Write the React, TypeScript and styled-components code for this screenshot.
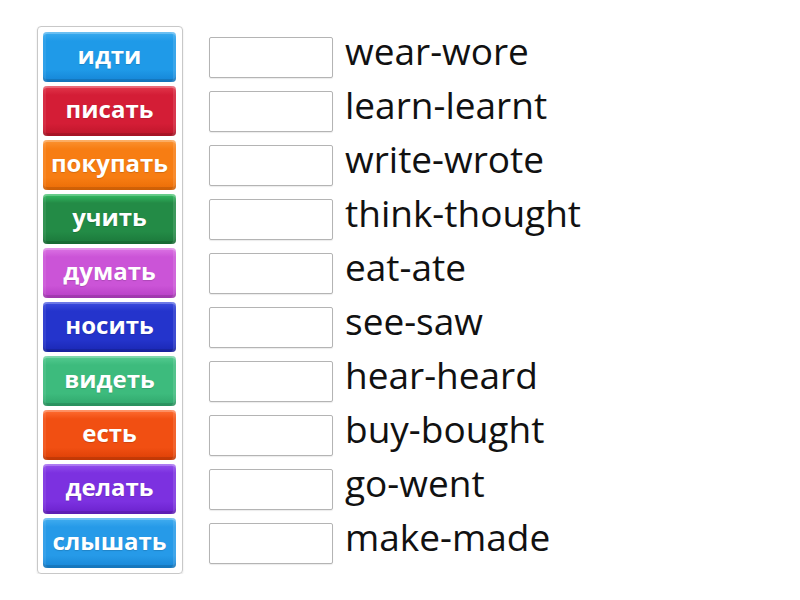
import * as React from "react";
import styled, { createGlobalStyle } from "styled-components";

const GlobalStyle = createGlobalStyle`
  html, body {
    margin: 0;
    padding: 0;
    background: #fff;
    font-family: "Open Sans", "Liberation Sans", sans-serif;
  }
`;

const SPage = styled.div`
  display: flex;
  align-items: flex-start;
  padding: 26px 0 0 37px;
  gap: 26px;
`;

const STilePanel = styled.div`
  display: flex;
  flex-direction: column;
  gap: 4px;
  padding: 5px 6px 5px 5px;
  border: 1px solid #c8c8c8;
  border-radius: 4px;
  box-shadow: 0 1px 2px rgba(0, 0, 0, 0.12);
`;

interface ITileStyle {
  top: string;
  base: string;
  bottom: string;
}

const STile = styled.div<ITileStyle>`
  width: 133px;
  height: 50px;
  box-sizing: border-box;
  display: flex;
  align-items: center;
  justify-content: center;
  padding-bottom: 4px;
  border-radius: 4px;
  background: linear-gradient(
    to bottom,
    ${({ top }) => top} 0%,
    ${({ base }) => base} 18%,
    ${({ base }) => base} 75%,
    ${({ bottom }) => bottom} 100%
  );
  box-shadow: inset 0 2px 0 rgba(255, 255, 255, 0.25),
    inset 3px 0 0 rgba(255, 255, 255, 0.08),
    inset -3px 0 0 rgba(255, 255, 255, 0.12),
    inset 0 -3px 0 rgba(0, 0, 0, 0.12);
  color: #fff;
  font-family: "Open Sans", sans-serif;
  font-weight: 700;
  font-size: 24px;
  line-height: 1;
  white-space: nowrap;
  text-shadow: 0 1px 1px rgba(0, 0, 0, 0.15);
`;

const SAnswerColumn = styled.div`
  display: flex;
  flex-direction: column;
  gap: 4px;
  padding-top: 6px;
`;

const SRow = styled.div`
  height: 50px;
  display: flex;
  align-items: center;
  gap: 12px;
`;

const SDropBox = styled.div`
  width: 124px;
  height: 41px;
  flex-shrink: 0;
  box-sizing: border-box;
  border: 1px solid #b4b4b4;
  border-radius: 2px;
  background: #fff;
  box-shadow: 0 1px 1px rgba(0, 0, 0, 0.08);
`;

const SPrompt = styled.span`
  font-family: "Open Sans", sans-serif;
  font-size: 37px;
  color: #111;
  line-height: 1;
  white-space: nowrap;
  margin-top: -13px;
`;

const tiles: { label: string; top: string; base: string; bottom: string }[] = [
  { label: "идти", top: "#3aabef", base: "#1f9ae8", bottom: "#1584d6" },
  { label: "писать", top: "#e2384c", base: "#d41d36", bottom: "#bd1529" },
  { label: "покупать", top: "#fb9433", base: "#f77d13", bottom: "#ea6c06" },
  { label: "учить", top: "#35c064", base: "#238b46", bottom: "#1b773a" },
  { label: "думать", top: "#dc74e4", base: "#cb54d7", bottom: "#b63ec5" },
  { label: "носить", top: "#3e4fe0", base: "#2434cc", bottom: "#1a27b3" },
  { label: "видеть", top: "#55cc91", base: "#3dbb7d", bottom: "#2fa56b" },
  { label: "есть", top: "#ff6e33", base: "#f14f12", bottom: "#dc3f05" },
  { label: "делать", top: "#9551ee", base: "#7c31e0", bottom: "#6a20cc" },
  { label: "слышать", top: "#43aef0", base: "#269ae8", bottom: "#1886d6" },
];

const prompts = [
  "wear-wore",
  "learn-learnt",
  "write-wrote",
  "think-thought",
  "eat-ate",
  "see-saw",
  "hear-heard",
  "buy-bought",
  "go-went",
  "make-made",
];

const App = () => (
  <>
    <GlobalStyle />
    <SPage>
      <STilePanel>
        {tiles.map((t) => (
          <STile key={t.label} top={t.top} base={t.base} bottom={t.bottom}>
            {t.label}
          </STile>
        ))}
      </STilePanel>
      <SAnswerColumn>
        {prompts.map((p) => (
          <SRow key={p}>
            <SDropBox />
            <SPrompt>{p}</SPrompt>
          </SRow>
        ))}
      </SAnswerColumn>
    </SPage>
  </>
);

export default App;
